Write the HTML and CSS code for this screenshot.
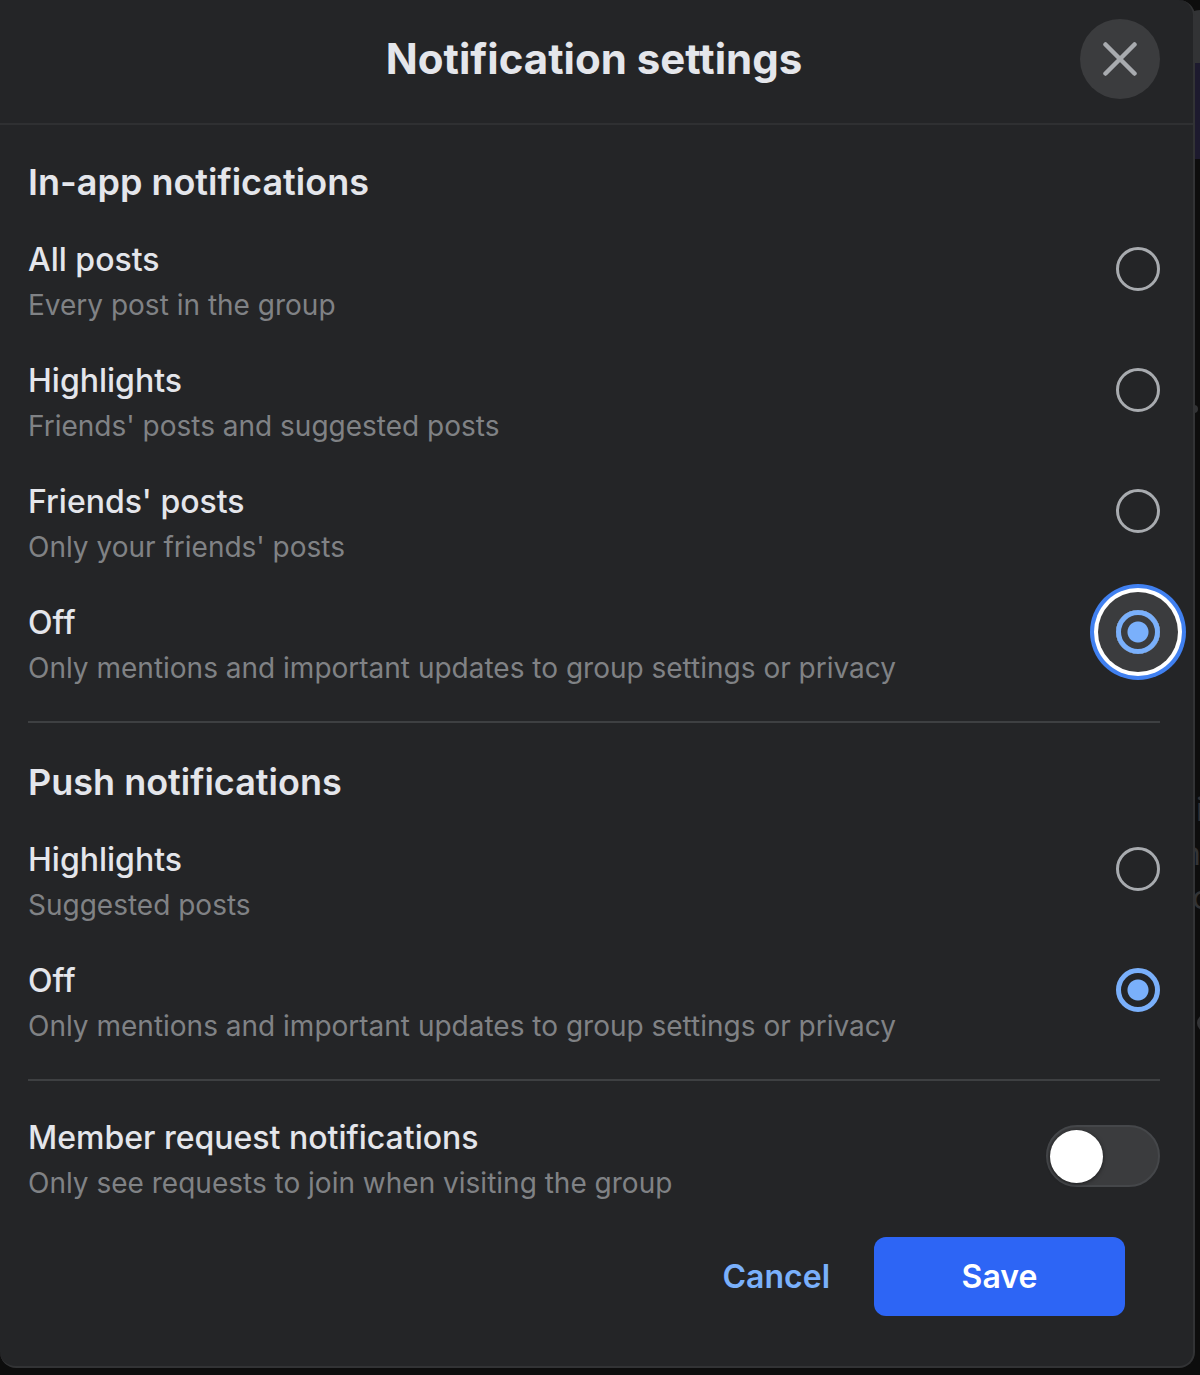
FILE: index.html
```html
<!DOCTYPE html>
<html lang="en">
<head>
<meta charset="utf-8">
<meta name="viewport" content="width=device-width, initial-scale=1">
<title>Notification settings</title>
<link rel="stylesheet" href="styles.css">
</head>
<body>
<div class="backdrop" aria-hidden="true">
  <span class="backdrop-tab"></span>
  <span class="backdrop-cover"></span>
  <span class="backdrop-dot"></span>
  <span class="backdrop-text"><span class="backdrop-line">i</span><span class="backdrop-line backdrop-line-wide">n</span><span class="backdrop-line backdrop-line-round">c</span></span>
  <span class="backdrop-badge"></span>
</div>
<form class="dialog" role="dialog" aria-labelledby="dialog-title">
  <header class="dialog-header">
    <h1 class="dialog-title" id="dialog-title">Notification settings</h1>
    <button class="close" type="button" aria-label="Close">
      <svg class="close-icon" viewBox="0 0 34 34" aria-hidden="true"><path d="M2.5 2.5l29 29M31.5 2.5l-29 29"/></svg>
    </button>
  </header>
  <div class="dialog-body">
    <fieldset class="section">
      <legend class="section-title">In-app notifications</legend>
      <label class="option">
        <span class="option-text"><span class="option-name">All posts</span><span class="option-note">Every post in the group</span></span>
        <input class="radio" type="radio" name="in-app">
      </label>
      <label class="option">
        <span class="option-text"><span class="option-name">Highlights</span><span class="option-note">Friends' posts and suggested posts</span></span>
        <input class="radio" type="radio" name="in-app">
      </label>
      <label class="option">
        <span class="option-text"><span class="option-name">Friends' posts</span><span class="option-note">Only your friends' posts</span></span>
        <input class="radio" type="radio" name="in-app">
      </label>
      <label class="option">
        <span class="option-text"><span class="option-name">Off</span><span class="option-note">Only mentions and important updates to group settings or privacy</span></span>
        <input class="radio radio-focused" type="radio" name="in-app" checked>
      </label>
    </fieldset>
    <fieldset class="section">
      <legend class="section-title">Push notifications</legend>
      <label class="option">
        <span class="option-text"><span class="option-name">Highlights</span><span class="option-note">Suggested posts</span></span>
        <input class="radio" type="radio" name="push">
      </label>
      <label class="option">
        <span class="option-text"><span class="option-name">Off</span><span class="option-note">Only mentions and important updates to group settings or privacy</span></span>
        <input class="radio" type="radio" name="push" checked>
      </label>
    </fieldset>
    <label class="option">
      <span class="option-text"><span class="option-name">Member request notifications</span><span class="option-note">Only see requests to join when visiting the group</span></span>
      <input class="switch" type="checkbox" role="switch">
    </label>
  </div>
  <footer class="dialog-footer">
    <button class="button button-cancel" type="button">Cancel</button>
    <button class="button button-save" type="submit">Save</button>
  </footer>
</form>
</body>
</html>
```

FILE: styles.css
```css
* {
  box-sizing: border-box;
}

body {
  margin: 0;
  padding: 0 5px 8px 0;
  background: #0d0d0d;
  color: #e4e6eb;
  font-family: Inter, "Liberation Sans", sans-serif;
}

/* Page content that shows past the dialog's right edge */
.backdrop {
  position: absolute;
  top: 10px;
  right: 0;
  z-index: -1;
  width: 20px;
  overflow: hidden;
  color: #323335;
  font-size: 32px;
  line-height: 44px;
}

.backdrop-tab,
.backdrop-cover,
.backdrop-dot,
.backdrop-text,
.backdrop-line,
.backdrop-badge {
  display: block;
}

.backdrop-tab {
  height: 53px;
  border-radius: 20px 0 0 0;
  background: #323335;
}

.backdrop-cover {
  height: 96px;
  background: #1d1a2e;
}

.backdrop-dot {
  width: 8px;
  height: 8px;
  margin: 246px 0 0 10px;
  border-radius: 50%;
  background: #323335;
}

.backdrop-text {
  margin-top: 375px;
}

.backdrop-line {
  padding-left: 16px;
}

.backdrop-line-wide {
  padding-left: 2px;
}

.backdrop-line-round {
  padding-left: 12px;
}

.backdrop-badge {
  width: 18px;
  height: 18px;
  margin: 94px 0 0 17px;
  border-radius: 50%;
  background: #323335;
}

.dialog {
  border: solid #323335;
  border-width: 0 2px 2px 0;
  border-radius: 0 16px 16px 16px;
  background: #242527;
}

.dialog-header {
  display: grid;
  grid-template-columns: 80px 1fr 80px;
  align-items: center;
  padding: 19px 33px 24px 28px;
  border-bottom: 2px solid #2f3032;
}

.dialog-title {
  grid-column: 2;
  margin: 0;
  font-size: 42px;
  font-weight: 700;
  line-height: 48px;
  text-align: center;
}

.close {
  display: grid;
  place-items: center;
  width: 80px;
  height: 80px;
  padding: 0;
  border: 0;
  border-radius: 50%;
  background: #3b3c3e;
}

.close-icon {
  width: 34px;
  height: 34px;
  fill: none;
  stroke: #a8abaf;
  stroke-width: 4.5;
  stroke-linecap: round;
}

.dialog-body {
  padding: 35px 33px 0 28px;
}

.section {
  margin: 0 0 37px;
  padding: 0 0 33px;
  border: 0;
  border-bottom: 2px solid #3e4042;
}

.section-title {
  margin-bottom: 36px;
  padding: 0;
  font-size: 36px;
  font-weight: 600;
  line-height: 44px;
}

.option {
  display: flex;
  justify-content: space-between;
  align-items: flex-start;
}

.option + .option {
  margin-top: 36px;
}

.option-text {
  display: flex;
  flex-direction: column;
  gap: 5px;
}

.option-name {
  font-size: 32px;
  font-weight: 500;
  line-height: 40px;
}

.option-note {
  color: #808285;
  font-size: 28px;
  line-height: 40px;
}

.radio {
  flex: none;
  appearance: none;
  width: 44px;
  height: 44px;
  margin: 7px 0 0;
  border: 3px solid #a8abaf;
  border-radius: 50%;
}

.radio:checked {
  border: 5px solid #7ab0fb;
  background: radial-gradient(circle, #7ab0fb 10px, transparent 11px);
}

.radio-focused:checked {
  background: radial-gradient(circle, #7ab0fb 10px, #3b3c3e 11px);
  box-shadow: 0 0 0 18px #3b3c3e, 0 0 0 22px #fff, 0 0 0 26px #4080f0;
}

.switch {
  flex: none;
  appearance: none;
  display: flex;
  align-items: center;
  width: 114px;
  height: 62px;
  margin: 7px 0 0;
  padding: 0 2px;
  border: 2px solid #45474a;
  border-radius: 31px;
  background: #3b3c3e;
}

.switch::before {
  content: "";
  width: 53px;
  height: 53px;
  border-radius: 50%;
  background: #fff;
  box-shadow: 0 1px 4px #0008;
}

.switch:checked {
  justify-content: flex-end;
  background: #2d65f5;
}

.dialog-footer {
  display: flex;
  justify-content: flex-end;
  padding: 34px 68px 50px 28px;
}

.button {
  height: 79px;
  padding: 0 44px;
  border: 0;
  border-radius: 12px;
  background: none;
  font-family: inherit;
  font-size: 32px;
  font-weight: 600;
}

.button-cancel {
  color: #7ab0fb;
}

.button-save {
  min-width: 251px;
  background: #2d65f5;
  color: #fff;
}
```
